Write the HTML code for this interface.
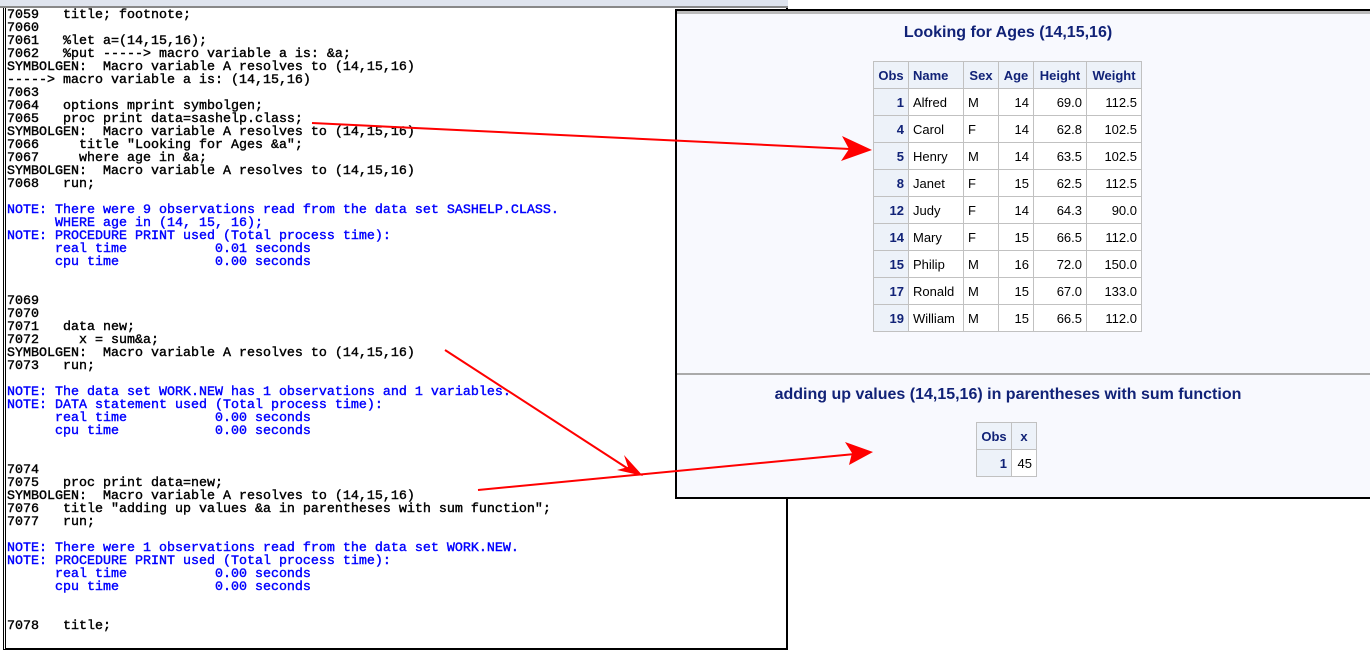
<!DOCTYPE html>
<html><head><meta charset="utf-8"><style>
*{margin:0;padding:0;box-sizing:border-box}
body{width:1370px;height:650px;background:#fff;position:relative;overflow:hidden;font-family:"Liberation Sans",sans-serif}
#top{position:absolute;left:0;top:0;width:788px;height:8px;background:#dfe4ee;border-bottom:2px solid #888}
#log{position:absolute;left:3px;top:8px;width:785px;height:642px;border-left:3px double #000;border-right:2px solid #000;border-bottom:2px solid #000;background:#fff}
#log pre{position:absolute;left:1px;top:1px;font-family:"Liberation Mono",monospace;font-size:13.33px;line-height:13px;color:#000;font-weight:normal;-webkit-text-stroke:0.4px #000}
.b{color:#0000ff;-webkit-text-stroke:0.4px #0000ff}
#res{position:absolute;left:675px;top:9px;width:695px;height:490px;border:2px solid #000;border-right:none;background:#f8f9fe}
#res .hd{position:absolute;left:0;top:0;right:0;height:3px;background:#bbb}
.ttl{position:absolute;left:0;width:662px;text-align:center;color:#112277;font-weight:bold;font-size:16px}
.sep{position:absolute;left:0;right:0;top:362px;height:2px;background:#aaa}
table{position:absolute;border-collapse:collapse;font-size:13px;background:#fff;table-layout:fixed}
td,th{border:1px solid #c1c1c1;height:27px;padding:0 4px;overflow:hidden;white-space:nowrap}
th{background:#edf2f9;color:#112277;font-weight:bold}
td.o{background:#edf2f9;color:#112277;font-weight:bold;text-align:right}
td.r{text-align:right}
svg{position:absolute;left:0;top:0}
</style></head><body>
<div id="top"></div>
<div id="log"><pre>7059   title; footnote;
7060
7061   %let a=(14,15,16);
7062   %put -----&gt; macro variable a is: &amp;a;
SYMBOLGEN:  Macro variable A resolves to (14,15,16)
-----&gt; macro variable a is: (14,15,16)
7063
7064   options mprint symbolgen;
7065   proc print data=sashelp.class;
SYMBOLGEN:  Macro variable A resolves to (14,15,16)
7066     title "Looking for Ages &amp;a";
7067     where age in &amp;a;
SYMBOLGEN:  Macro variable A resolves to (14,15,16)
7068   run;

<span class="b">NOTE: There were 9 observations read from the data set SASHELP.CLASS.
      WHERE age in (14, 15, 16);
NOTE: PROCEDURE PRINT used (Total process time):
      real time           0.01 seconds
      cpu time            0.00 seconds</span>


7069
7070
7071   data new;
7072     x = sum&amp;a;
SYMBOLGEN:  Macro variable A resolves to (14,15,16)
7073   run;

<span class="b">NOTE: The data set WORK.NEW has 1 observations and 1 variables.
NOTE: DATA statement used (Total process time):
      real time           0.00 seconds
      cpu time            0.00 seconds</span>


7074
7075   proc print data=new;
SYMBOLGEN:  Macro variable A resolves to (14,15,16)
7076   title "adding up values &amp;a in parentheses with sum function";
7077   run;

<span class="b">NOTE: There were 1 observations read from the data set WORK.NEW.
NOTE: PROCEDURE PRINT used (Total process time):
      real time           0.00 seconds
      cpu time            0.00 seconds</span>


7078   title;</pre></div>
<div id="res"><div class="hd"></div>
<div class="ttl" style="top:13px">Looking for Ages (14,15,16)</div>
<table style="left:196px;top:50px;width:268px">
<colgroup><col style="width:35px"><col style="width:55px"><col style="width:35px"><col style="width:35px"><col style="width:53px"><col style="width:55px"></colgroup>
<tr><th>Obs</th><th style="text-align:left">Name</th><th>Sex</th><th>Age</th><th>Height</th><th>Weight</th></tr>
<tr><td class="o">1</td><td>Alfred</td><td>M</td><td class="r">14</td><td class="r">69.0</td><td class="r">112.5</td></tr>
<tr><td class="o">4</td><td>Carol</td><td>F</td><td class="r">14</td><td class="r">62.8</td><td class="r">102.5</td></tr>
<tr><td class="o">5</td><td>Henry</td><td>M</td><td class="r">14</td><td class="r">63.5</td><td class="r">102.5</td></tr>
<tr><td class="o">8</td><td>Janet</td><td>F</td><td class="r">15</td><td class="r">62.5</td><td class="r">112.5</td></tr>
<tr><td class="o">12</td><td>Judy</td><td>F</td><td class="r">14</td><td class="r">64.3</td><td class="r">90.0</td></tr>
<tr><td class="o">14</td><td>Mary</td><td>F</td><td class="r">15</td><td class="r">66.5</td><td class="r">112.0</td></tr>
<tr><td class="o">15</td><td>Philip</td><td>M</td><td class="r">16</td><td class="r">72.0</td><td class="r">150.0</td></tr>
<tr><td class="o">17</td><td>Ronald</td><td>M</td><td class="r">15</td><td class="r">67.0</td><td class="r">133.0</td></tr>
<tr><td class="o">19</td><td>William</td><td>M</td><td class="r">15</td><td class="r">66.5</td><td class="r">112.0</td></tr>
</table>
<div class="sep"></div>
<div class="ttl" style="top:375px">adding up values (14,15,16) in parentheses with sum function</div>
<table style="left:299px;top:411px;width:60px">
<colgroup><col style="width:35px"><col style="width:25px"></colgroup>
<tr><th>Obs</th><th>x</th></tr>
<tr><td class="o">1</td><td class="r">45</td></tr>
</table>
</div>
<svg width="1370" height="650">
<g stroke="#ff0000" stroke-width="2" fill="none">
<line x1="312" y1="123" x2="850" y2="149"/>
<line x1="445" y1="350" x2="630" y2="470"/>
<line x1="478" y1="490" x2="855" y2="454"/>
</g>
<g fill="#ff0000">
<polygon points="872,150 842,136 849,149 841,161"/>
<polygon points="643,476 624,455 628,467 617,470"/>
<polygon points="873,452 845,442 852,453 849,465"/>
</g>
</svg>
</body></html>
